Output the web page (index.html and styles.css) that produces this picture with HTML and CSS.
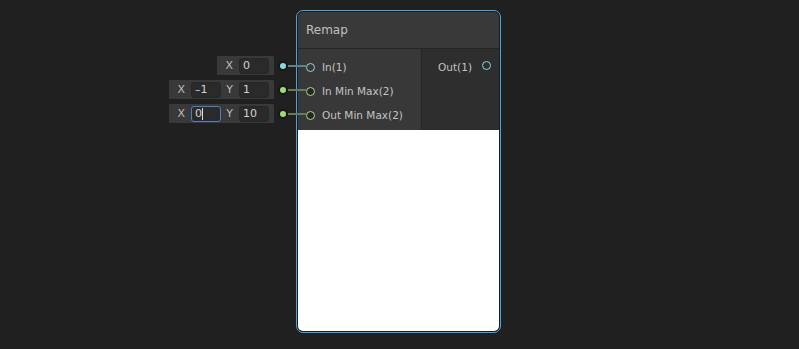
FILE: index.html
```html
<!DOCTYPE html>
<html lang="en">
<head>
  <meta charset="utf-8" />
  <title>Remap node</title>
  <link rel="stylesheet" href="styles.css">
</head>
<body>
  <div class="canvas">
    <div class="node">
      <div class="node-inner">
        <div class="node-title">Remap</div>
        <div class="node-ports">
          <div class="inputs">
            <div class="port-row"><span class="port cyan"></span>In(1)</div>
            <div class="port-row"><span class="port green"></span>In Min Max(2)</div>
            <div class="port-row"><span class="port green"></span>Out Min Max(2)</div>
          </div>
          <div class="outputs">
            <div class="port-row out"><span class="out-label">Out(1)</span><span class="port cyan open"></span></div>
          </div>
        </div>
        <div class="preview"></div>
      </div>
    </div>

    <div class="inline-inputs">
      <div class="inline-row">
        <div class="fields">
          <span class="axis">X</span><span class="field">0</span>
        </div>
        <div class="wire cyan"><span class="dot"></span><span class="line"></span></div>
      </div>
      <div class="inline-row">
        <div class="fields">
          <span class="axis">X</span><span class="field">–1</span>
          <span class="axis">Y</span><span class="field">1</span>
        </div>
        <div class="wire green"><span class="dot"></span><span class="line"></span></div>
      </div>
      <div class="inline-row">
        <div class="fields">
          <span class="axis">X</span><span class="field focused">0<span class="caret"></span></span>
          <span class="axis">Y</span><span class="field">10</span>
        </div>
        <div class="wire green"><span class="dot"></span><span class="line"></span></div>
      </div>
    </div>
  </div>
</body>
</html>
```

FILE: styles.css
```css
* {
  box-sizing: border-box;
  margin: 0;
  padding: 0;
}
body {
  background-color: #202020;
  font-family: 'DejaVu Sans', sans-serif;
  font-size: 10.5px;
  color: #c4c4c4;
}
.canvas {
  position: relative;
  width: 799px;
  height: 349px;
  overflow: hidden;
}
.node {
  position: absolute;
  left: 296px;
  top: 10px;
  width: 205px;
  height: 323px;
  border: 1px solid #4aa3e6;
  border-radius: 7px;
  padding: 1px;
  background-color: #1c1c1c;
}
.node-inner {
  height: 100%;
  border-radius: 5px;
  overflow: hidden;
  display: flex;
  flex-direction: column;
}
.node-title {
  height: 37px;
  padding-left: 8px;
  display: flex;
  align-items: center;
  background-color: #393939;
  border-bottom: 1px solid #252525;
  font-size: 12px;
  color: #c0c0c0;
}
.node-ports {
  display: flex;
  height: 81px;
}
.inputs {
  width: 124px;
  background-color: #383838;
  border-right: 1px solid #262626;
  padding-top: 6px;
}
.outputs {
  flex: 1;
  background-color: #2e2e2e;
  padding-top: 6px;
}
.port-row {
  height: 24px;
  display: flex;
  align-items: center;
  padding-left: 8px;
  white-space: nowrap;
}
.port-row.out {
  justify-content: flex-end;
  padding-left: 0;
  padding-right: 8px;
  margin-top: -2px;
}
.out-label {
  position: relative;
  top: 2px;
}
.port {
  width: 9px;
  height: 9px;
  border-radius: 50%;
  border: 1.5px solid;
  margin-right: 7px;
  background-color: #262626;
}
.port.cyan {
  border-color: #8fd6dc;
  background-color: #383838;
}
.port.green {
  border-color: #a6d98a;
}
.port.open {
  margin-right: 0;
  margin-left: 10px;
  background-color: #2e2e2e;
}
.preview {
  flex: 1;
  background-color: #fff;
}
.inline-inputs {
  position: absolute;
  left: 0;
  top: 56px;
  width: 306px;
  display: flex;
  flex-direction: column;
  align-items: flex-end;
  gap: 5px;
}
.inline-row {
  display: flex;
  height: 19px;
}
.fields {
  display: flex;
  align-items: center;
  padding: 0 5px 0 4px;
  background-color: #393939;
}
.axis {
  width: 18px;
  padding-right: 6px;
  text-align: right;
  color: #bdbdbd;
  font-size: 11px;
}
.field {
  width: 30px;
  height: 16px;
  padding-left: 3px;
  display: flex;
  align-items: center;
  background-color: #2a2a2a;
  border: 1px solid #262626;
  border-radius: 3px;
  color: #d2d2d2;
  font-size: 11px;
}
.field.focused {
  border-color: #4d7fc2;
}
.caret {
  width: 1px;
  height: 12px;
  background-color: #e0e0e0;
}
.wire {
  width: 32px;
  display: flex;
  align-items: center;
}
.dot {
  width: 6px;
  height: 6px;
  margin-left: 6px;
  border-radius: 50%;
  box-shadow: 0 0 0 2px #181818;
}
.line {
  flex: 1;
  height: 2px;
  margin-left: 2px;
}
.wire.cyan .dot {
  background-color: #8fd6e2;
}
.wire.cyan .line {
  background-color: #5a8488;
}
.wire.green .dot {
  background-color: #9fdc72;
}
.wire.green .line {
  background-color: #667a5c;
}
```
